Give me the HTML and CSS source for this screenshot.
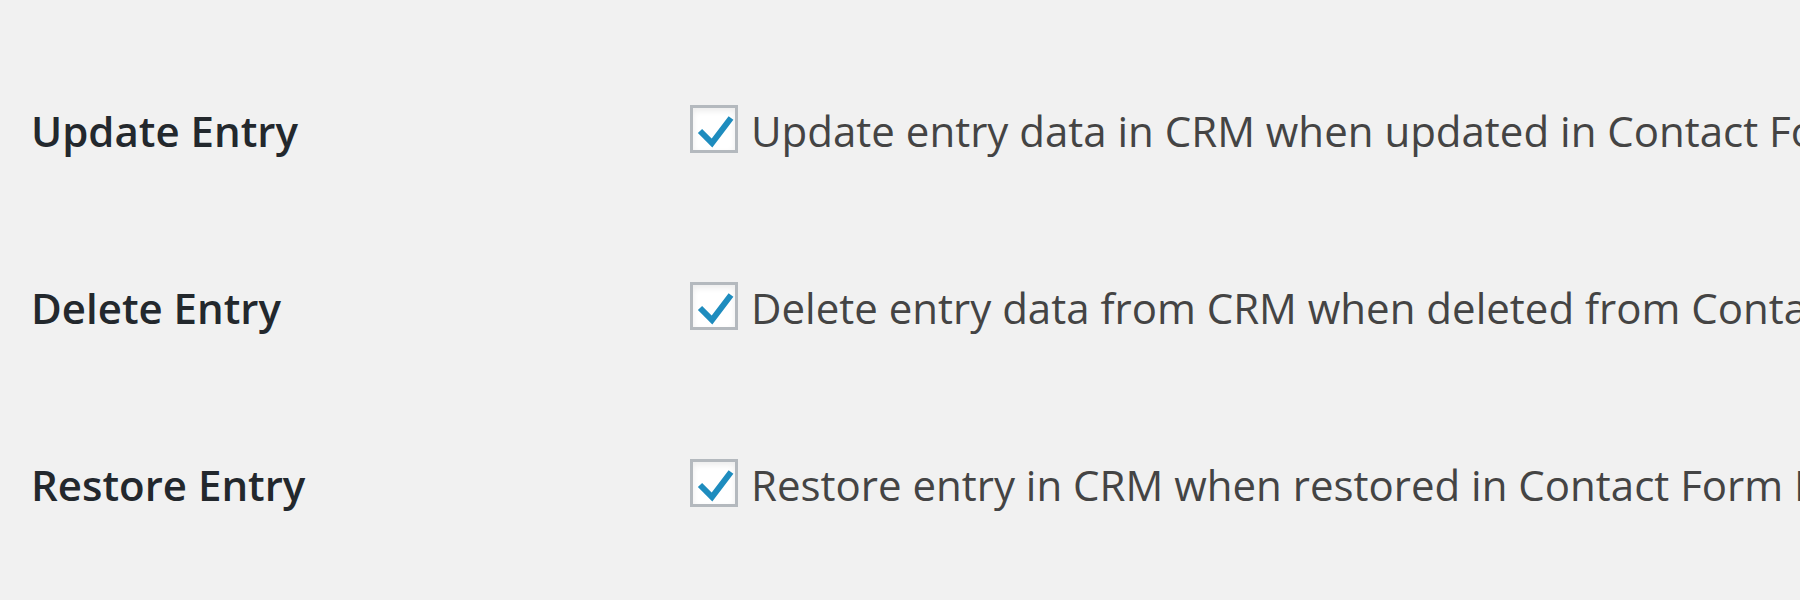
FILE: index.html
```html
<!DOCTYPE html>
<html lang="en">
<head>
    <meta charset="UTF-8">
    <meta name="viewport" content="width=device-width, initial-scale=1.0">
    <title>Entry Settings</title>
    <link rel="stylesheet" href="styles.css">
</head>
<body>
    <div class="settings">
        <div class="row">
            <div class="label">Update Entry</div>
            <label class="field">
                <span class="checkbox">
                    <svg viewBox="0 0 48 48"><polyline points="10,26 22,38 41,13"/></svg>
                </span>
                <span class="desc">Update entry data in CRM when updated in Contact Form Entries</span>
            </label>
        </div>
        <div class="row">
            <div class="label">Delete Entry</div>
            <label class="field">
                <span class="checkbox">
                    <svg viewBox="0 0 48 48"><polyline points="10,26 22,38 41,13"/></svg>
                </span>
                <span class="desc">Delete entry data from CRM when deleted from Contact Form Entries</span>
            </label>
        </div>
        <div class="row">
            <div class="label">Restore Entry</div>
            <label class="field">
                <span class="checkbox">
                    <svg viewBox="0 0 48 48"><polyline points="10,26 22,38 41,13"/></svg>
                </span>
                <span class="desc">Restore entry in CRM when restored in Contact Form Entries</span>
            </label>
        </div>
    </div>
</body>
</html>
```

FILE: styles.css
```css
/* Nastavení záznamů */
* {
    margin: 0;
    padding: 0;
    box-sizing: border-box;
}
body {
    font-family: "Open Sans", "Noto Sans", sans-serif;
    background-color: #f1f1f1;
    overflow: hidden;
    height: 600px;
}
.settings {
    padding: 44px 0 0 31px;
    white-space: nowrap;
}
.row {
    display: flex;
    align-items: flex-start;
    padding: 60px 0 63px;
    line-height: 54px;
    font-size: 42px;
}
.label {
    width: 659px;
    flex-shrink: 0;
    color: #23282d;
    font-weight: 600;
}
.field {
    display: flex;
    align-items: flex-start;
    gap: 13px;
    color: #444;
}
.checkbox {
    width: 48px;
    height: 48px;
    margin-top: 1px;
    flex-shrink: 0;
    border: 3px solid #b4b9be;
    background-color: #fff;
    box-shadow: inset 0 3px 6px rgba(0, 0, 0, 0.08);
    position: relative;
}
.checkbox svg {
    position: absolute;
    left: -3px;
    top: -3px;
    width: 48px;
    height: 48px;
}
.checkbox polyline {
    fill: none;
    stroke: #1e8cbe;
    stroke-width: 6;
}
```
